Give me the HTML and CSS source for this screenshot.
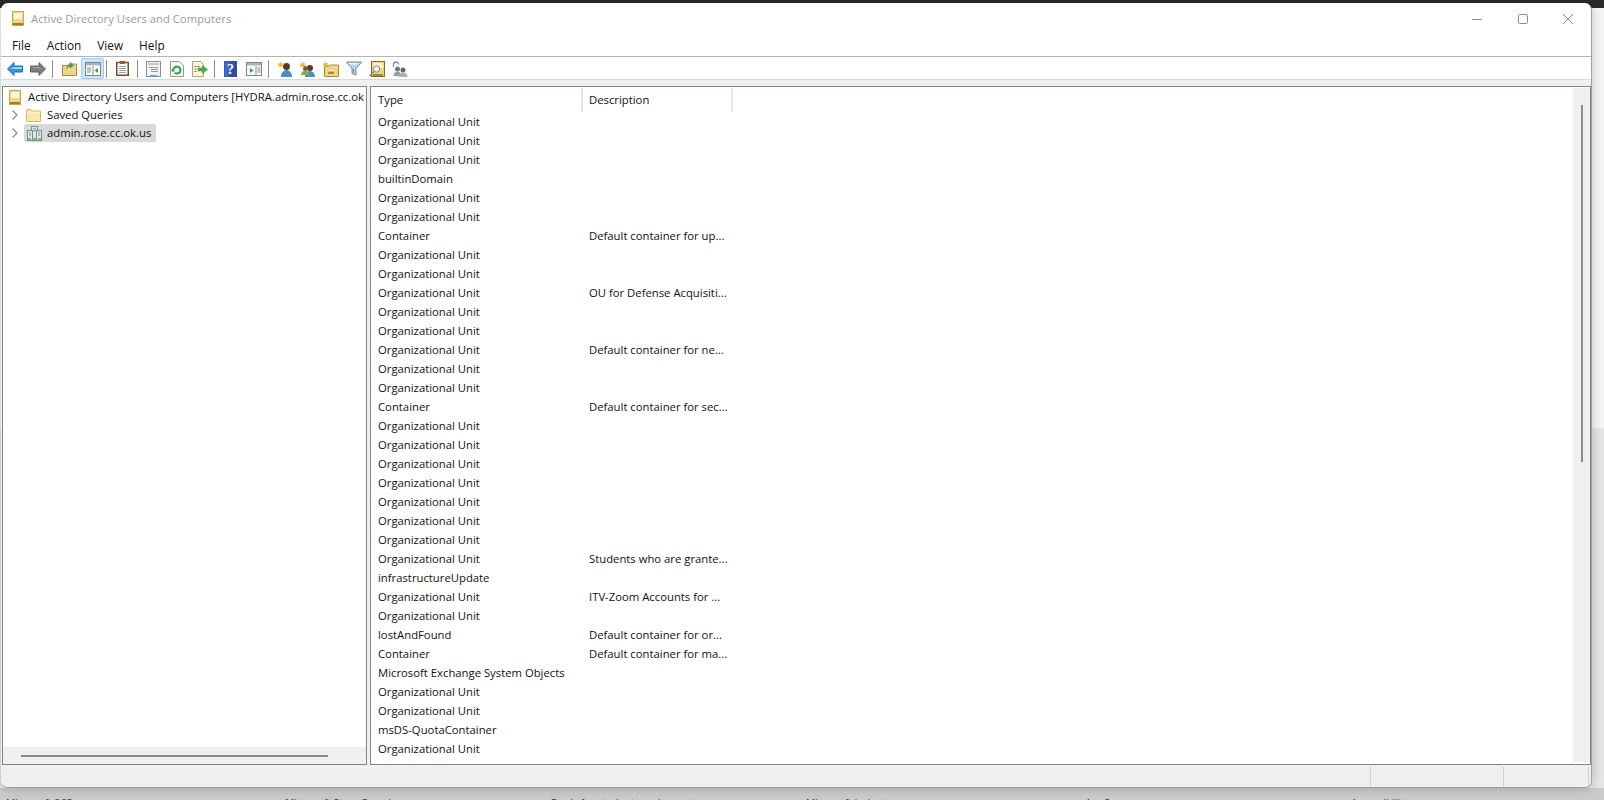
FILE: index.html
```html
<!DOCTYPE html>
<html lang="en">
<head>
    <meta charset="UTF-8">
    <meta name="viewport" content="width=device-width, initial-scale=1.0">
    <title>Active Directory Users and Computers</title>
    <link rel="stylesheet" href="styles.css">
</head>
<body>
    <div class="window">
        <div class="titlebar">
            <svg width="12" height="15" viewBox="0 0 12 15"><rect width="12" height="15" fill="#c9a84a"/><rect x="1" y="1" width="10" height="13" fill="#ecd68a"/><rect x="2" y="2" width="8" height="6" fill="#fbf5d6"/><rect x="1" y="12" width="10" height="2" fill="#9c7d2a"/></svg>
            <span class="title-text">Active Directory Users and Computers</span>
            <div class="caption">
                <svg width="12" height="12" viewBox="0 0 12 12"><path d="M1 6.500h10" stroke="#8d8d8d" fill="none"/></svg>
                <svg width="12" height="12" viewBox="0 0 12 12"><rect x="1.500" y="1.500" width="9" height="9" rx="1" stroke="#8d8d8d" fill="none"/></svg>
                <svg width="12" height="12" viewBox="0 0 12 12"><path d="M1 1l10 10M11 1L1 11" stroke="#8d8d8d" fill="none"/></svg>
            </div>
        </div>
        <div class="menubar">
            <span>File</span><span>Action</span><span>View</span><span>Help</span>
        </div>
        <div class="toolbar">
            <button class="tool"><svg width="16" height="14" viewBox="0 0 16 14"><path d="M0.500 7L7 0.500v3.500h8.500v6H7v3.500z" fill="#2f95e6" stroke="#1c6fb8"/><path d="M7 5h8v2H3z" fill="#9ed4f7"/></svg></button>
            <button class="tool"><svg width="16" height="14" viewBox="0 0 16 14"><path d="M15.500 7L9 0.500v3.500H0.500v6H9v3.500z" fill="#808080" stroke="#5f5f5f"/><path d="M1 5h8v1.500h3z" fill="#bbb"/></svg></button>
            <i class="sep sep-wide"></i>
            <button class="tool"><svg width="15" height="15" viewBox="0 0 15 15"><path d="M0.500 4.500h5l1 -1.500h8v11.500h-14z" fill="#f0d68a" stroke="#a8893a"/><path d="M4 9c0-3 2-5 4-5.500V1l4 3.500-4 3V5.500C6.500 6 5 7 4 9z" fill="#3fa047"/></svg></button>
            <button class="tool tool-on"><svg width="16" height="14" viewBox="0 0 16 14"><rect x="0.500" y="0.500" width="15" height="13" fill="#fff" stroke="#7d8790"/><rect x="1" y="1" width="14" height="2.500" fill="#a9b3bc"/><path d="M8 4v9" stroke="#7d8790"/><path d="M2 6h4M2 8h4M2 10h4" stroke="#7d8790"/><path d="M13 6v5L9.500 8.500z" fill="#2f9e3f"/></svg></button>
            <i class="sep sep-narrow"></i>
            <button class="tool"><svg width="13" height="15" viewBox="0 0 13 15"><rect x="0.750" y="1.500" width="11.500" height="12.750" fill="#fff" stroke="#7a4a24" stroke-width="1.500"/><rect x="4" y="0" width="5" height="3" fill="#8a5a30"/><path d="M3 5.500h7M3 7.500h7M3 9.500h7M3 11.500h7" stroke="#7fa6c9"/></svg></button>
            <i class="sep"></i>
            <button class="tool"><svg width="15" height="16" viewBox="0 0 15 16"><rect x="0.500" y="0.500" width="14" height="15" fill="#f3f3f3" stroke="#8e8e8e"/><rect x="2" y="2" width="11" height="2" fill="#c9c9c9"/><path d="M3 6.500h9M5 8.500h7M5 10.500h7" stroke="#9a9a9a"/><rect x="4" y="14" width="7" height="1.500" fill="#4fa8e0"/></svg></button>
            <button class="tool"><svg width="16" height="16" viewBox="0 0 16 16"><path d="M1.500 0.500h9l4 4v11h-13z" fill="#f7f7f7" stroke="#9a9a9a"/><path d="M4.500 9a3.500 3.500 0 1 1 1.200 2.700" fill="none" stroke="#2f9e3f" stroke-width="2"/><path d="M3 7.500l3 3h-3.500z" fill="#2f9e3f"/></svg></button>
            <button class="tool"><svg width="16" height="16" viewBox="0 0 16 16"><path d="M0.500 0.500h8l3 3v12h-11z" fill="#fbf6dc" stroke="#a9a27c"/><path d="M2.500 5.500h2M2.500 8h2M2.500 10.500h2M5.500 5.500h2" stroke="#6b6b5a"/><path d="M6 7h4.500V4.500L15.500 8.500l-5 4V10H6z" fill="#4cae3f" stroke="#2f8a2a" stroke-width="0.500"/></svg></button>
            <i class="sep"></i>
            <button class="tool"><svg width="13" height="16" viewBox="0 0 13 16"><rect width="13" height="16" fill="#2b4ea8"/><rect x="0.500" y="0.500" width="5" height="15" fill="#3f68c6"/><text x="6.500" y="13" class="help-mark">?</text></svg></button>
            <button class="tool"><svg width="16" height="14" viewBox="0 0 16 14"><rect x="0.500" y="0.500" width="15" height="13" fill="#fff" stroke="#7d8790"/><rect x="1" y="1" width="14" height="2.500" fill="#a9b3bc"/><path d="M10 4v9" stroke="#7d8790"/><path d="M11.500 6h3M11.500 8h3M11.500 10h3" stroke="#7d8790"/><path d="M4 6v5l3.500-2.500z" fill="#2f9e3f"/></svg></button>
            <i class="sep"></i>
            <button class="tool"><svg width="16" height="16" viewBox="0 0 16 16"><circle cx="9.500" cy="5.500" r="3.500" fill="#5b3a22"/><path d="M4 16c0-5 3-7 5.500-7S15 11 15 16z" fill="#4a8fc9"/><path d="M3.500 0.500l.8 2 2-.6-1 1.800 1.400 1.300-2 .3-.5 2-1.200-1.700-2 .6 1-1.800L.500 2.800l2 -.2z" fill="#f5b62e"/></svg></button>
            <button class="tool"><svg width="17" height="16" viewBox="0 0 17 16"><circle cx="11" cy="7" r="3" fill="#5b3a22"/><path d="M6 16c0-4 3-6 5-6s5 2 5 6z" fill="#4a8fc9"/><circle cx="6.500" cy="7.500" r="2.500" fill="#7a5a30"/><path d="M2 14c0-3 2.500-4.500 4.500-4.500S10 11 10 14z" fill="#7fb04a"/><path d="M3.500 0.500l.8 2 2-.6-1 1.800 1.400 1.300-2 .3-.5 2-1.200-1.700-2 .6 1-1.800L.500 2.800l2 -.2z" fill="#f5b62e"/></svg></button>
            <button class="tool"><svg width="17" height="16" viewBox="0 0 17 16"><path d="M2.500 5.500h4l1-1.500h9v11.500h-14z" fill="#f0d68a" stroke="#a8893a"/><rect x="6" y="9" width="6" height="4" fill="#b58d2c"/><rect x="6" y="9" width="6" height="1.500" fill="#fbeeb8"/><path d="M3.500 0.500l.8 2 2-.6-1 1.800 1.400 1.300-2 .3-.5 2-1.200-1.700-2 .6 1-1.800L.500 2.800l2 -.2z" fill="#f5b62e"/></svg></button>
            <button class="tool"><svg width="16" height="15" viewBox="0 0 16 15"><path d="M0.500 1h15L10 7.500V14l-4-1.500V7.500z" fill="#b8d4e8" stroke="#6a8aa3"/><path d="M2.500 2h11l-1.500 1.500H4z" fill="#e8f3fa"/><path d="M7 8v4l1 .5V8z" fill="#6a8aa3"/></svg></button>
            <button class="tool"><svg width="16" height="16" viewBox="0 0 16 16"><rect x="2.500" y="0.500" width="13" height="15" fill="#f0d478" stroke="#8a6d1c"/><rect x="4" y="2" width="10" height="5" fill="#fbf3cf"/><rect x="4" y="13" width="10" height="2" fill="#a8882c"/><circle cx="7.500" cy="8" r="3.200" fill="#e8f3fa" stroke="#7d8790"/><path d="M5 10.500L0.500 15" stroke="#7d8790" stroke-width="1.500"/></svg></button>
            <button class="tool"><svg width="16" height="16" viewBox="0 0 16 16"><path d="M1.500 6V3.500a2.500 2.500 0 0 1 5 0" fill="none" stroke="#8a8a8a" stroke-width="1.300"/><circle cx="5.500" cy="8" r="2.500" fill="#777"/><path d="M1.500 15c0-3 2-4.500 4-4.500s4 1.500 4 4.500z" fill="#9a9a9a"/><circle cx="11" cy="9" r="2.500" fill="#666"/><path d="M6.500 16c0-3 2-4.500 4.500-4.500s4.500 1.500 4.500 4.500z" fill="#b0b0b0"/></svg></button>
        </div>
        <div class="band"></div>
        <div class="panes">
            <div class="tree-pane">
                <div class="tree">
                    <div class="tree-row tree-root">
                        <svg width="12" height="15" viewBox="0 0 12 15"><rect width="12" height="15" fill="#c9a84a"/><rect x="1" y="1" width="10" height="13" fill="#ecd68a"/><rect x="2" y="2" width="8" height="6" fill="#fbf5d6"/><rect x="1" y="12" width="10" height="2" fill="#9c7d2a"/></svg>
                        <span>Active Directory Users and Computers [HYDRA.admin.rose.cc.ok</span>
                    </div>
                    <div class="tree-row">
                        <svg class="chevron" width="6" height="10" viewBox="0 0 6 10"><path d="M0.500 0.500L5 5 0.500 9.500" fill="none" stroke="#8a8a8a" stroke-width="1.200"/></svg>
                        <svg width="15" height="13" viewBox="0 0 15 13"><path d="M0.500 12.500V1.500q0-1 1-1h3.500l1.500 1.500h8v10.500z" fill="#f8e6ae" stroke="#d6b76c"/><path d="M1 4h13" stroke="#fdf6dc"/></svg>
                        <span class="node-label">Saved Queries</span>
                    </div>
                    <div class="tree-row">
                        <svg class="chevron" width="6" height="10" viewBox="0 0 6 10"><path d="M0.500 0.500L5 5 0.500 9.500" fill="none" stroke="#8a8a8a" stroke-width="1.200"/></svg>
                        <div class="node-selected">
                            <svg width="15" height="15" viewBox="0 0 15 15"><rect x="4.500" y="0.500" width="6" height="14" fill="#dfe6ea" stroke="#7f8c94"/><rect x="0.500" y="4.500" width="5" height="10" fill="#dfe6ea" stroke="#7f8c94"/><rect x="9.500" y="4.500" width="5" height="10" fill="#dfe6ea" stroke="#7f8c94"/><path d="M6 3h3M6 5h3M2 7h2M11 7h2M2 9h2M11 9h2" stroke="#7f8c94"/><path d="M1 13h3M11 13h3M6 13h3" stroke="#3fbf4f" stroke-width="1.500"/></svg>
                            <span class="node-label">admin.rose.cc.ok.us</span>
                        </div>
                    </div>
                </div>
                <div class="hscroll"><div class="hthumb"></div></div>
            </div>
            <div class="list-pane">
                <div class="list">
                    <div class="list-head">
                        <div class="col-type">Type</div>
                        <div class="col-desc">Description</div>
                    </div>
                    <div class="list-row"><div class="col-type">Organizational Unit</div></div>
                    <div class="list-row"><div class="col-type">Organizational Unit</div></div>
                    <div class="list-row"><div class="col-type">Organizational Unit</div></div>
                    <div class="list-row"><div class="col-type">builtinDomain</div></div>
                    <div class="list-row"><div class="col-type">Organizational Unit</div></div>
                    <div class="list-row"><div class="col-type">Organizational Unit</div></div>
                    <div class="list-row"><div class="col-type">Container</div><div class="col-desc">Default container for up...</div></div>
                    <div class="list-row"><div class="col-type">Organizational Unit</div></div>
                    <div class="list-row"><div class="col-type">Organizational Unit</div></div>
                    <div class="list-row"><div class="col-type">Organizational Unit</div><div class="col-desc">OU for Defense Acquisiti...</div></div>
                    <div class="list-row"><div class="col-type">Organizational Unit</div></div>
                    <div class="list-row"><div class="col-type">Organizational Unit</div></div>
                    <div class="list-row"><div class="col-type">Organizational Unit</div><div class="col-desc">Default container for ne...</div></div>
                    <div class="list-row"><div class="col-type">Organizational Unit</div></div>
                    <div class="list-row"><div class="col-type">Organizational Unit</div></div>
                    <div class="list-row"><div class="col-type">Container</div><div class="col-desc">Default container for sec...</div></div>
                    <div class="list-row"><div class="col-type">Organizational Unit</div></div>
                    <div class="list-row"><div class="col-type">Organizational Unit</div></div>
                    <div class="list-row"><div class="col-type">Organizational Unit</div></div>
                    <div class="list-row"><div class="col-type">Organizational Unit</div></div>
                    <div class="list-row"><div class="col-type">Organizational Unit</div></div>
                    <div class="list-row"><div class="col-type">Organizational Unit</div></div>
                    <div class="list-row"><div class="col-type">Organizational Unit</div></div>
                    <div class="list-row"><div class="col-type">Organizational Unit</div><div class="col-desc">Students who are grante...</div></div>
                    <div class="list-row"><div class="col-type">infrastructureUpdate</div></div>
                    <div class="list-row"><div class="col-type">Organizational Unit</div><div class="col-desc">ITV-Zoom Accounts for ...</div></div>
                    <div class="list-row"><div class="col-type">Organizational Unit</div></div>
                    <div class="list-row"><div class="col-type">lostAndFound</div><div class="col-desc">Default container for or...</div></div>
                    <div class="list-row"><div class="col-type">Container</div><div class="col-desc">Default container for ma...</div></div>
                    <div class="list-row"><div class="col-type">Microsoft Exchange System Objects</div></div>
                    <div class="list-row"><div class="col-type">Organizational Unit</div></div>
                    <div class="list-row"><div class="col-type">Organizational Unit</div></div>
                    <div class="list-row"><div class="col-type">msDS-QuotaContainer</div></div>
                    <div class="list-row"><div class="col-type">Organizational Unit</div></div>
                </div>
                <div class="vscroll"><div class="vthumb"></div></div>
            </div>
        </div>
        <div class="statusbar">
            <div class="status-cell status-main"></div>
            <div class="status-cell status-mid"></div>
            <div class="status-cell status-end"></div>
        </div>
    </div>
    <div class="page-footer">
        <span class="foot-a">Microsoft 365</span>
        <span class="foot-b">Microsoft Store Promise</span>
        <span class="foot-c">Deals for students and parents</span>
        <span class="foot-d">Microsoft Industry</span>
        <span class="foot-e">AppSource</span>
        <span class="foot-f">Accessibility</span>
    </div>
</body>
</html>
```

FILE: styles.css
```css
html, body {
    height: 100%;
}
body {
    margin: 0;
    overflow: hidden;
    font-family: "Open Sans", "Liberation Sans", sans-serif;
    font-size: 11.3px;
    color: #111;
    background: linear-gradient(to bottom, #2b2b2d 0, #2b2b2d 8px, #f6f6f6 8px, #f6f6f6 428px, #e6e6e6 428px, #e6e6e6 788px, #cbcbcb 788px);
}
.window {
    width: 1591px;
    height: 785px;
    margin: 3px 0 0 1px;
    box-sizing: border-box;
    display: flex;
    flex-direction: column;
    background-color: #fff;
    border-radius: 7px;
    border-right: 1px solid #a0a0a0;
    border-bottom: 1px solid #9a9a9a;
    box-shadow: 0 0 12px rgba(0, 0, 0, 0.22);
}
.titlebar {
    height: 31px;
    display: flex;
    align-items: center;
    padding-left: 11px;
    flex: none;
}
.title-text {
    margin-left: 7px;
    color: #9b9b9b;
}
.caption {
    margin-left: auto;
    display: flex;
    gap: 33.500px;
    padding-right: 17px;
}
.menubar {
    height: 22px;
    display: flex;
    align-items: center;
    gap: 16px;
    padding-left: 11px;
    font-size: 11.800px;
    border-bottom: 1px solid #b4b4b4;
    flex: none;
}
.toolbar {
    height: 22px;
    display: flex;
    align-items: flex-end;
    padding-left: 2px;
    flex: none;
    border-bottom: 1px solid #d9d9d9;
}
.tool {
    width: 23px;
    height: 21px;
    padding: 0;
    border: 1px solid transparent;
    border-radius: 2px;
    background: none;
    display: flex;
    align-items: center;
    justify-content: center;
}
.tool-on {
    background-color: #cce4f7;
    border-color: #99d1ff;
}
.sep {
    width: 1px;
    height: 18px;
    margin: 0 4px 1px 3px;
    background-color: #8f8f8f;
}
.sep-wide {
    margin: 0 5px 1px 3px;
}
.sep-narrow {
    margin: 0 4px 1px 2px;
}
.help-mark {
    font-family: "Liberation Serif", serif;
    font-size: 14px;
    font-weight: bold;
    fill: #fff;
    text-anchor: middle;
}
.band {
    height: 6px;
    background-color: #f0f0f0;
    flex: none;
}
.panes {
    flex: 1;
    min-height: 0;
    display: flex;
    background-color: #f0f0f0;
    padding-left: 1px;
}
.tree-pane {
    width: 365px;
    box-sizing: border-box;
    border: 1px solid #7d858d;
    background-color: #fff;
    display: flex;
    flex-direction: column;
}
.tree {
    flex: 1;
    min-height: 0;
    padding-top: 1px;
    overflow: hidden;
}
.tree-row {
    height: 18px;
    display: flex;
    align-items: center;
    padding-left: 9px;
    white-space: nowrap;
}
.tree-row span {
    margin-bottom: 2px;
}
.tree-root {
    padding-left: 6px;
    gap: 7px;
}
.tree-root span {
    min-width: 0;
    overflow: hidden;
}
.chevron {
    margin-right: 6px;
}
.tree-row svg {
    flex: none;
}
.tree-row > svg + svg {
    margin-left: 2px;
}
.node-label {
    margin-left: 6px;
}
.node-selected {
    height: 18px;
    display: flex;
    align-items: center;
    padding: 0 5px 0 3px;
    background-color: #d9d9d9;
    border-radius: 2px;
}
.node-selected .node-label {
    margin-left: 5px;
}
.hscroll {
    height: 17px;
    background-color: #f0f0f0;
    display: flex;
    align-items: center;
    padding-left: 18px;
    flex: none;
}
.hthumb {
    width: 307px;
    height: 2px;
    background-color: #8a8a8a;
}
.list-pane {
    width: 1221px;
    margin-left: 3px;
    box-sizing: border-box;
    border: 1px solid #7d858d;
    background-color: #fff;
    display: flex;
}
.list {
    flex: 1;
    min-width: 0;
    padding: 1px 0 0 7px;
    overflow: hidden;
}
.list-head {
    height: 24px;
    display: flex;
}
.list-head .col-type,
.list-head .col-desc {
    border-right: 2px solid #e6e6e6;
    line-height: 24px;
    box-sizing: border-box;
}
.list-head .col-desc {
    width: 150px;
}
.list-row {
    height: 19px;
    line-height: 19px;
    display: flex;
}
.col-type {
    width: 205px;
    white-space: nowrap;
}
.col-desc {
    padding-left: 6px;
    white-space: nowrap;
}
.vscroll {
    width: 17px;
    background-color: #f0f0f0;
    flex: none;
    margin: 1px 0 2px;
    padding-top: 17px;
    box-sizing: border-box;
    display: flex;
    justify-content: center;
}
.vthumb {
    width: 2px;
    height: 357px;
    background-color: #8a8a8a;
}
.statusbar {
    height: 22px;
    display: flex;
    background-color: #f0f0f0;
    border-radius: 0 0 7px 7px;
    padding: 2px 0 1px;
    box-sizing: border-box;
    flex: none;
}
.status-cell {
    border-right: 1px solid #cfcfcf;
}
.status-main {
    width: 1369px;
}
.status-mid {
    width: 132px;
}
.status-end {
    width: 84px;
}
.page-footer {
    display: flex;
    padding-top: 8px;
    color: #3a3a3a;
    font-size: 10.400px;
    white-space: nowrap;
    line-height: 14px;
}
.foot-a {
    margin-left: 6px;
    width: 279px;
}
.foot-b {
    width: 266px;
}
.foot-c {
    width: 255px;
}
.foot-d {
    width: 279px;
}
.foot-e {
    width: 266px;
}
```
